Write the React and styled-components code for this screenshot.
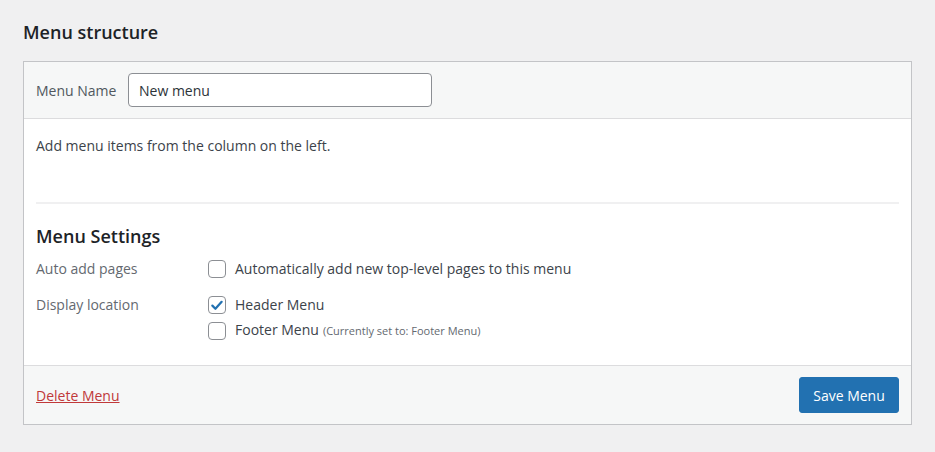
import React from "react";
import styled, { createGlobalStyle } from "styled-components";

const Global = createGlobalStyle`
  html, body { margin: 0; padding: 0; background: #f0f0f1; }
  body { font-family: "Open Sans", "Noto Sans", sans-serif; font-size: 14px; color: #3c434a; }
  * { box-sizing: border-box; }
`;

const Page = styled.div`
  padding: 21px 23px 27px;
`;

const Title = styled.h2`
  margin: 0 0 17px;
  font-size: 18px;
  line-height: 23px;
  font-weight: 600;
  color: #1d2327;
`;

const Box = styled.div`
  border: 1px solid #c3c4c7;
  background: #fff;
`;

const Header = styled.div`
  display: flex;
  align-items: center;
  padding: 11px 12px;
  background: #f6f7f7;
  border-bottom: 1px solid #dcdcde;
`;

const NameLabel = styled.label`
  width: 92px;
  color: #50575e;
  font-size: 14px;
`;

const Input = styled.input`
  width: 304px;
  height: 34px;
  padding: 0 10px;
  border: 1px solid #8c8f94;
  border-radius: 4px;
  font-family: inherit;
  font-size: 14px;
  color: #2c3338;
  background: #fff;
  outline: none;
`;

const Body = styled.div`
  padding: 17px 12px 23px;
`;

const Instructions = styled.p`
  margin: 0;
  font-size: 14px;
  line-height: 20px;
  color: #3c434a;
`;

const Divider = styled.div`
  height: 2px;
  background: #f0f0f1;
  margin: 46px 0 20px;
`;

const SubTitle = styled.h3`
  margin: 0 0 10px;
  font-size: 18px;
  line-height: 24px;
  font-weight: 600;
  color: #1d2327;
`;

const SettingRow = styled.div`
  display: grid;
  grid-template-columns: 172px 1fr;
  align-items: start;
  margin-bottom: ${(p) => p.$gap || 0}px;
`;

const SettingLabel = styled.div`
  color: #646970;
  font-size: 14px;
  line-height: 22px;
`;

const Options = styled.div`
  display: flex;
  flex-direction: column;
  gap: ${(p) => p.$gap || 0}px;
`;

const Option = styled.label`
  display: flex;
  align-items: center;
  gap: 9px;
  font-size: 14px;
  line-height: 22px;
  color: #3c434a;
`;

const Box18 = styled.span`
  width: 18px;
  height: 18px;
  border: 1px solid #8c8f94;
  border-radius: 4px;
  background: #fff;
  display: inline-flex;
  align-items: center;
  justify-content: center;
  flex: none;
`;

const Small = styled.span`
  font-size: 11px;
  color: #646970;
  margin-left: 4px;
`;

const Footer = styled.div`
  display: flex;
  align-items: center;
  justify-content: space-between;
  padding: 11px 12px 11px;
  background: #f6f7f7;
  border-top: 1px solid #dcdcde;
`;

const DeleteLink = styled.a`
  color: #c0393a;
  text-decoration: underline;
  font-size: 14px;
  cursor: pointer;
`;

const SaveButton = styled.button`
  height: 36px;
  width: 100px;
  border: 1px solid #2271b1;
  border-radius: 3px;
  background: #2271b1;
  color: #fff;
  font-family: inherit;
  font-size: 14px;
  cursor: pointer;
`;

function Checkbox({ checked }) {
  return (
    <Box18>
      {checked && (
        <svg width="17" height="17" viewBox="0 0 20 20">
          <path d="M4.2 10.2l3.8 3.8 7.8-8.6" fill="none" stroke="#2271b1" strokeWidth="2.8" strokeLinecap="round" strokeLinejoin="round" />
        </svg>
      )}
    </Box18>
  );
}

export default function App() {
  return (
    <>
      <Global />
      <Page>
        <Title>Menu structure</Title>
        <Box>
          <Header>
            <NameLabel>Menu Name</NameLabel>
            <Input defaultValue="New menu" />
          </Header>
          <Body>
            <Instructions>Add menu items from the column on the left.</Instructions>
            <Divider />
            <SubTitle>Menu Settings</SubTitle>
            <SettingRow $gap={14}>
              <SettingLabel>Auto add pages</SettingLabel>
              <Options>
                <Option>
                  <Checkbox />
                  Automatically add new top-level pages to this menu
                </Option>
              </Options>
            </SettingRow>
            <SettingRow>
              <SettingLabel>Display location</SettingLabel>
              <Options $gap={3}>
                <Option>
                  <Checkbox checked />
                  Header Menu
                </Option>
                <Option>
                  <Checkbox />
                  <span>
                    Footer Menu<Small>(Currently set to: Footer Menu)</Small>
                  </span>
                </Option>
              </Options>
            </SettingRow>
          </Body>
          <Footer>
            <DeleteLink>Delete Menu</DeleteLink>
            <SaveButton>Save Menu</SaveButton>
          </Footer>
        </Box>
      </Page>
    </>
  );
}
